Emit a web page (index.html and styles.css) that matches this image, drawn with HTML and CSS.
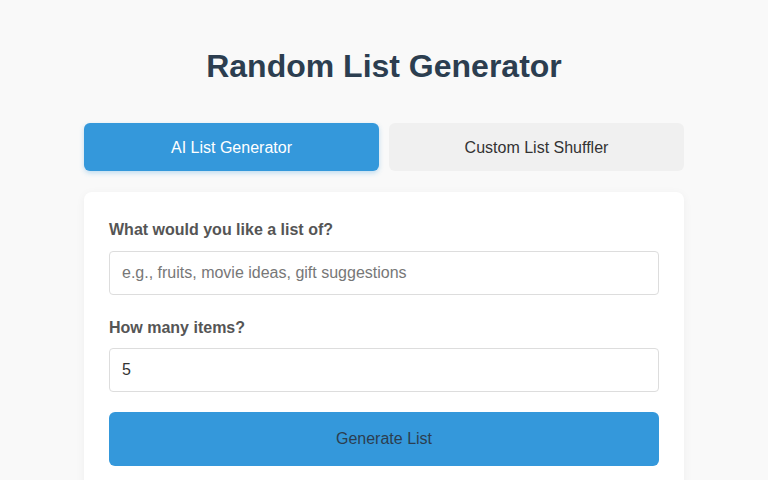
FILE: index.html
```html
<!DOCTYPE html>
<html lang="en">
<head>
<meta charset="utf-8">
<title>Random List Generator</title>
<link rel="stylesheet" href="styles.css">
</head>
<body>
<div class="container">
  <h1 class="title">Random List Generator</h1>
  <div class="tabs">
    <button class="tab active">AI List Generator</button>
    <button class="tab">Custom List Shuffler</button>
  </div>
  <div class="card">
    <div class="group">
      <label class="label">What would you like a list of?</label>
      <input class="input" type="text" placeholder="e.g., fruits, movie ideas, gift suggestions">
    </div>
    <div class="group">
      <label class="label">How many items?</label>
      <input class="input" type="text" value="5">
    </div>
    <button class="generate">Generate List</button>
  </div>
</div>
</body>
</html>
```
FILE: styles.css
```css
html, body {
  margin: 0;
  padding: 0;
  background: #f9f9f9;
  font-family: "Liberation Sans", Arial, sans-serif;
}
.container {
  width: 600px;
  margin: 0 auto;
  padding-top: 48px;
}
.title {
  margin: 0 0 38px;
  text-align: center;
  font-size: 32px;
  font-weight: bold;
  color: #2c3e50;
  line-height: 37px;
}
.tabs {
  display: flex;
  gap: 10px;
  margin-bottom: 21px;
}
.tab {
  flex: 1;
  height: 48px;
  border: none;
  border-radius: 6px;
  background: #f0f0f0;
  color: #333;
  font-family: inherit;
  font-size: 16px;
  padding: 2px 0 0;
}
.tab.active {
  background: #3498db;
  color: #fff;
  box-shadow: 0 2px 5px rgba(52, 152, 219, 0.3);
}
.card {
  background: #fff;
  border-radius: 8px;
  box-shadow: 0 2px 10px rgba(0, 0, 0, 0.05);
  padding: 26px 25px 25px;
}
.group {
  margin-bottom: 20px;
}
.group + .group .label {
  padding-top: 1px;
  margin-bottom: 8px;
}
.label {
  display: block;
  font-size: 16px;
  font-weight: bold;
  color: #555;
  line-height: 24px;
  margin-bottom: 9px;
}
.input {
  display: block;
  box-sizing: border-box;
  width: 100%;
  height: 44px;
  padding: 12px;
  border: 1px solid #ddd;
  border-radius: 4px;
  font-family: inherit;
  font-size: 16px;
  color: #333;
  background: #fff;
}
.input::placeholder {
  color: #777;
}
.generate {
  display: block;
  width: 100%;
  height: 54px;
  border: none;
  border-radius: 6px;
  background: #3498db;
  color: #2c3e50;
  font-family: inherit;
  font-size: 16px;
}
```
